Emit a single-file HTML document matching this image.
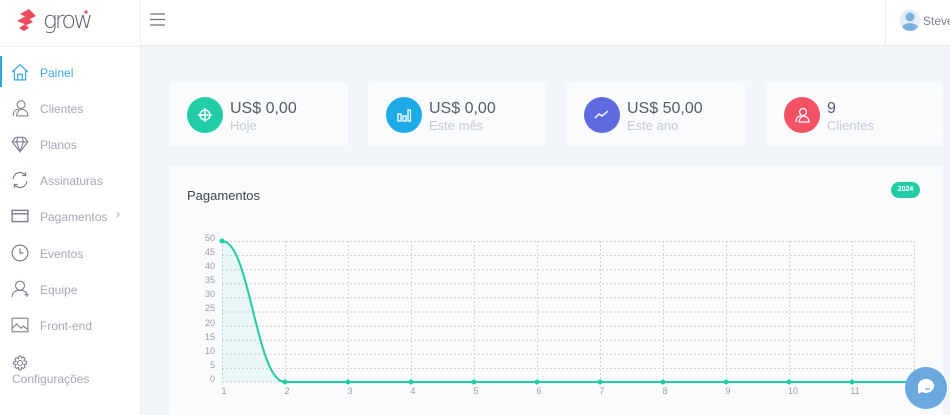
<!DOCTYPE html>
<html><head><meta charset="utf-8"><style>
*{margin:0;padding:0;box-sizing:border-box}
html,body{width:950px;height:415px;overflow:hidden}
body{background:#f3f6f8;font-family:"Liberation Sans",sans-serif;position:relative}
.side{position:absolute;left:0;top:0;width:141px;height:415px;background:#fff;border-right:1px solid #eceff1}
.top{position:absolute;left:141px;top:0;right:0;height:46px;background:#fff;border-bottom:1px solid #e8ecef}
.logo{position:absolute;left:14px;top:6px}
.nav{position:absolute;left:0;width:141px;height:32px;color:#a3a8b8;font-size:12px}
.nav svg{position:absolute;left:11px;top:7px}
.nav span{position:absolute;left:40px;top:10px}
.card{position:absolute;top:83px;height:63px;background:#f9fbfc;border-radius:3px}
.circ{position:absolute;left:18px;top:14px;width:36px;height:36px;border-radius:50%}
.circ svg{position:absolute;left:9px;top:9px}
.val{position:absolute;left:61px;top:17px;font-size:16px;color:#555c69}
.lab{position:absolute;left:61px;top:35px;font-size:13px;color:#c7cbd6}
</style></head><body>
<div class="side">
<svg class="logo" width="90" height="30" viewBox="0 0 90 30">
<path d="M6 8 L15 3 L22 10 L16 13 Z M3 15 L12 10 L19 16 L13 19 Z M5 22 L11 18 L15 22 L10 25 Z" fill="#ef4b5a"/>
<text x="29" y="22" font-size="24" fill="#5c6272" font-family="DejaVu Sans" font-weight="300" textLength="50">grow</text>
<circle cx="72" cy="6" r="1.6" fill="#ef4b5a"/>
</svg>
<div style="position:absolute;left:0;top:46px;width:141px;border-top:1px solid #eceff1"></div>
<div style="position:absolute;left:0;top:56px;width:2px;height:31px;background:#2aa6e0"></div>
<div class="nav" style="top:56px;color:#3aa9e2"><svg width="18" height="18" viewBox="0 0 16 16" fill="none" stroke="#3aa9e2" stroke-width="1.1"><path d="M1 8 L8 1.5 L15 8 M3 6.5 V15 H13 V6.5 M6 15 V10 H10 V15"/></svg><span>Painel</span></div>
<div class="nav" style="top:92px"><svg width="18" height="18" viewBox="0 0 16 16" fill="none" stroke="#7d8294" stroke-width="1"><circle cx="9" cy="5" r="3.5"/><path d="M2 15 C2 10 5 9 7 9 M9 9 C12 9 15 11 15 15 H5 C5 12 7 10 9 9"/></svg><span>Clientes</span></div>
<div class="nav" style="top:128px"><svg width="18" height="18" viewBox="0 0 16 16" fill="none" stroke="#7d8294" stroke-width="1"><path d="M4 2 H12 L15 6 L8 15 L1 6 Z M1 6 H15 M6 2 L5 6 L8 15 L11 6 L10 2"/></svg><span>Planos</span></div>
<div class="nav" style="top:164px"><svg width="18" height="18" viewBox="0 0 16 16" fill="none" stroke="#7d8294" stroke-width="1.1"><path d="M2 7 A6 6 0 0 1 13 4 M14 9 A6 6 0 0 1 3 12 M13 1 V4 H10 M3 15 V12 H6"/></svg><span>Assinaturas</span></div>
<div class="nav" style="top:200px"><svg width="18" height="18" viewBox="0 0 16 16" fill="none" stroke="#7d8294" stroke-width="1.3"><rect x="1" y="3" width="14" height="10"/><path d="M1 6 H15"/></svg><span>Pagamentos</span><span style="left:116px;top:7px">›</span></div>
<div class="nav" style="top:237px"><svg width="18" height="18" viewBox="0 0 16 16" fill="none" stroke="#7d8294" stroke-width="1.1"><circle cx="8" cy="8" r="7"/><path d="M8 4 V8 H11"/></svg><span>Eventos</span></div>
<div class="nav" style="top:273px"><svg width="18" height="18" viewBox="0 0 16 16" fill="none" stroke="#7d8294" stroke-width="1"><circle cx="8" cy="5" r="4"/><path d="M1 15 C1 11 4 9 8 9 C11 9 13 10 14 12 M12 13 H16 M14 11 V15"/></svg><span>Equipe</span></div>
<div class="nav" style="top:309px"><svg width="18" height="18" viewBox="0 0 16 16" fill="none" stroke="#7d8294" stroke-width="1"><rect x="1" y="2" width="14" height="12"/><path d="M1 11 L5 7 L9 11 L11 9 L15 12"/></svg><span>Front-end</span></div>
<svg style="position:absolute;left:12px;top:355px" width="16" height="16" viewBox="0 0 16 16" fill="none" stroke="#7d8294" stroke-width="1.1"><circle cx="8" cy="8" r="2.5"/><path d="M7 1 H9 L9.5 3 L11.5 2 L13 3.5 L12 5.5 L14.5 6.5 V9 L12 9.5 L13 12 L11.5 13.5 L9.5 12.5 L9 15 H7 L6.5 12.5 L4.5 13.5 L3 12 L4 9.5 L1.5 9 V7 L4 6.5 L3 4 L4.5 2.5 L6.5 3.5 Z"/></svg>
<div style="position:absolute;left:12px;top:372px;font-size:12px;color:#a3a8b8">Configurações</div>
</div>
<div class="top">
<svg style="position:absolute;left:9px;top:13px" width="15" height="13"><path d="M0 1 H15 M0 6.5 H15 M0 12 H15" stroke="#6b7080" stroke-width="1.3"/></svg>
<div style="position:absolute;left:744px;top:0;height:46px;border-left:1px solid #e8ecef"></div>
<svg style="position:absolute;left:758px;top:9px" width="22" height="22" viewBox="0 0 22 22"><circle cx="11" cy="11" r="10.5" fill="#e4eef8"/><circle cx="11" cy="8" r="4.5" fill="#7cb0e0"/><path d="M3 18 C5 13 17 13 19 18 A10 10 0 0 1 3 18 Z" fill="#7cb0e0"/></svg>
<div style="position:absolute;left:782px;top:14px;font-size:12px;color:#7d8294">Steve</div>
</div>

<div class="card" style="left:169px;width:179px"><div class="circ" style="background:#22cca6"><svg width="18" height="18" viewBox="0 0 18 18" fill="none" stroke="#fff" stroke-width="1.4"><circle cx="9" cy="9" r="5"/><path d="M9 2 V16 M2 9 H16"/></svg></div><div class="val">US$ 0,00</div><div class="lab">Hoje</div></div>
<div class="card" style="left:368px;width:178px"><div class="circ" style="background:#1eaae6"><svg width="18" height="18" viewBox="0 0 18 18" fill="none" stroke="#fff" stroke-width="1.3"><rect x="3" y="8" width="3" height="7"/><rect x="8" y="10" width="3" height="5"/><rect x="13" y="4" width="2.5" height="11"/></svg></div><div class="val">US$ 0,00</div><div class="lab">Este mês</div></div>
<div class="card" style="left:566px;width:179px"><div class="circ" style="background:#5f6ae0"><svg width="18" height="18" viewBox="0 0 18 18" fill="none" stroke="#fff" stroke-width="1.4"><path d="M2 12 L6 8 L9 10 L15 5"/></svg></div><div class="val">US$ 50,00</div><div class="lab">Este ano</div></div>
<div class="card" style="left:766px;width:177px"><div class="circ" style="background:#f35164"><svg width="18" height="18" viewBox="0 0 18 18" fill="none" stroke="#fff" stroke-width="1.2"><circle cx="10" cy="6" r="3.5"/><path d="M3 16 C3 11 6 10 8 10 M10 10 C13 10 16 12 16 16 H6 C6 13 8 11 10 10"/></svg></div><div class="val">9</div><div class="lab">Clientes</div></div>

<div style="position:absolute;left:169px;top:166px;width:774px;height:249px;background:#f9fbfc;border-radius:3px 3px 0 0"></div>
<div style="position:absolute;left:187px;top:188px;font-size:13px;color:#3e4452">Pagamentos</div>
<div style="position:absolute;left:891px;top:182px;width:29px;height:16px;border-radius:8px;background:#22cca6;color:#fff;font-size:7px;font-weight:bold;text-align:center;line-height:16px">2024</div>

<svg style="position:absolute;left:0;top:0" width="950" height="415">
<g stroke="#cfd2d6" stroke-width="1" stroke-dasharray="2,2" fill="none">
<path d="M222 241.5H915M222 255.6H915M222 269.7H915M222 283.8H915M222 297.9H915M222 312H915M222 326.1H915M222 340.2H915M222 354.3H915M222 368.4H915M222 382H915"/>
<path d="M222.5 241V382M285.5 241V382M348.5 241V382M411.5 241V382M474.5 241V382M537.5 241V382M600.5 241V382M663.5 241V382M726.5 241V382M789.5 241V382M852.5 241V382M914.5 241V382"/>
</g>
<path d="M222 241 C250 241 256 382 285 382 L222 382 Z" fill="#22cca6" fill-opacity="0.07"/>
<path d="M222 241 C250 241 256 382 285 382 H915" stroke="#22cca6" stroke-width="2" fill="none"/>
<g fill="#22cca6"><circle cx="222" cy="241" r="2.5"/><circle cx="285" cy="382" r="2.5"/><circle cx="348" cy="382" r="2.5"/><circle cx="411" cy="382" r="2.5"/><circle cx="474" cy="382" r="2.5"/><circle cx="537" cy="382" r="2.5"/><circle cx="600" cy="382" r="2.5"/><circle cx="663" cy="382" r="2.5"/><circle cx="726" cy="382" r="2.5"/><circle cx="789" cy="382" r="2.5"/><circle cx="852" cy="382" r="2.5"/></g>
<g font-size="9" fill="#9a9ea8" font-family="Liberation Sans" text-anchor="end">
<text x="215" y="241">50</text><text x="215" y="255">45</text><text x="215" y="269">40</text><text x="215" y="283">35</text><text x="215" y="297">30</text><text x="215" y="311">25</text><text x="215" y="326">20</text><text x="215" y="340">15</text><text x="215" y="354">10</text><text x="215" y="368">5</text><text x="215" y="382">0</text>
</g>
<g font-size="9" fill="#9a9ea8" font-family="Liberation Sans" text-anchor="middle">
<text x="224" y="394">1</text><text x="287" y="394">2</text><text x="350" y="394">3</text><text x="413" y="394">4</text><text x="476" y="394">5</text><text x="539" y="394">6</text><text x="602" y="394">7</text><text x="665" y="394">8</text><text x="728" y="394">9</text><text x="793" y="394">10</text><text x="855" y="394">11</text>
</g>
<circle cx="926" cy="388" r="21" fill="#6aa8de"/>
<path d="M918 386 a8 7 0 1 1 4 6 l-4 2 z" fill="#fff"/>
<path d="M925 389 h5" stroke="#6aa8de" stroke-width="1.2"/>
</svg>
</body></html>
